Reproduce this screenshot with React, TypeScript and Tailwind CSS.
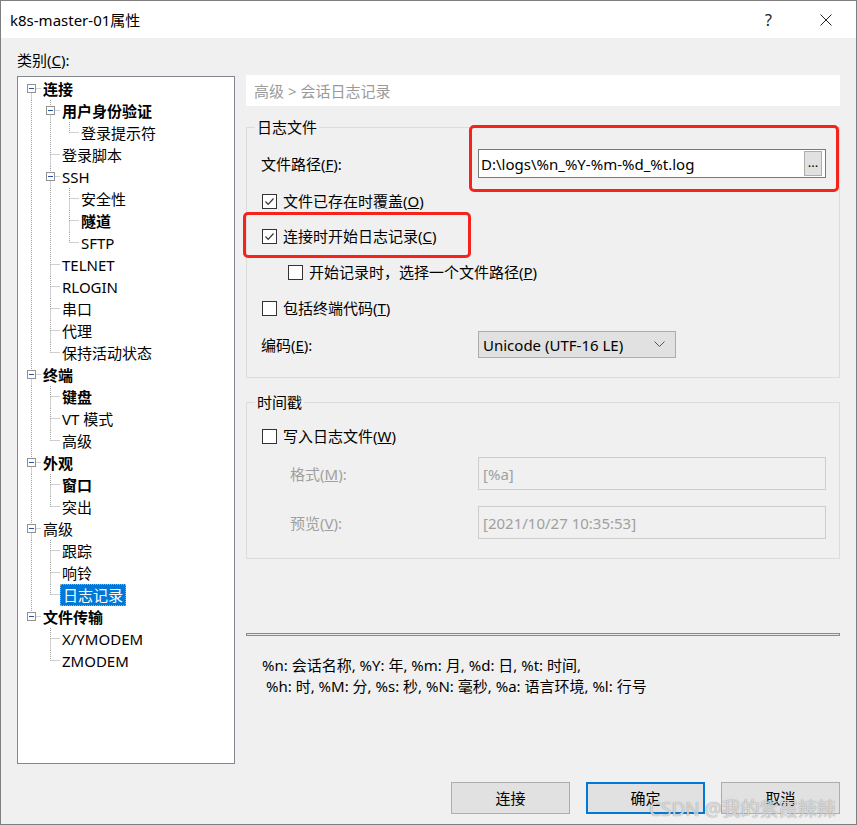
import React from "react";

type Node = {
  label: string;
  bold?: boolean;
  selected?: boolean;
  children?: Node[];
};

const tree: Node[] = [
  {
    label: "连接",
    bold: true,
    children: [
      { label: "用户身份验证", bold: true, children: [{ label: "登录提示符" }] },
      { label: "登录脚本" },
      {
        label: "SSH",
        children: [{ label: "安全性" }, { label: "隧道", bold: true }, { label: "SFTP" }],
      },
      { label: "TELNET" },
      { label: "RLOGIN" },
      { label: "串口" },
      { label: "代理" },
      { label: "保持活动状态" },
    ],
  },
  {
    label: "终端",
    bold: true,
    children: [{ label: "键盘", bold: true }, { label: "VT 模式" }, { label: "高级" }],
  },
  { label: "外观", bold: true, children: [{ label: "窗口", bold: true }, { label: "突出" }] },
  {
    label: "高级",
    children: [{ label: "跟踪" }, { label: "响铃" }, { label: "日志记录", selected: true }],
  },
  { label: "文件传输", bold: true, children: [{ label: "X/YMODEM" }, { label: "ZMODEM" }] },
];

type Row = {
  node: Node;
  guides: boolean[];
  hasNext: boolean;
  first: boolean;
  level: number;
};

const flatten = (nodes: Node[], guides: boolean[], level: number, out: Row[]) => {
  nodes.forEach((node, i) => {
    const hasNext = i < nodes.length - 1;
    out.push({ node, guides, hasNext, first: level === 0 && i === 0, level });
    if (node.children) flatten(node.children, [...guides, hasNext], level + 1, out);
  });
  return out;
};

const rows = flatten(tree, [], 0, []);

const dot = { stroke: "#a0a0a0", strokeWidth: 1, strokeDasharray: "1 1" };

const GuideCell = ({ on }: { on: boolean }) => (
  <svg width="19" height="22" className="shrink-0">
    {on && <line x1="9.5" y1="0" x2="9.5" y2="22" {...dot} />}
  </svg>
);

const OwnCell = ({ row }: { row: Row }) => (
  <svg width="19" height="22" className="shrink-0">
    {!row.first && <line x1="9.5" y1="0" x2="9.5" y2="10.5" {...dot} />}
    {row.hasNext && <line x1="9.5" y1="10.5" x2="9.5" y2="22" {...dot} />}
    <line x1="9.5" y1="10.5" x2="19" y2="10.5" {...dot} />
    {row.node.children && (
      <>
        <rect x="5.5" y="6.5" width="8" height="8" fill="#fff" stroke="#919191" />
        <line x1="7" y1="10.5" x2="12" y2="10.5" stroke="#2a52a8" />
      </>
    )}
  </svg>
);

const Check = ({ checked, label }: { checked?: boolean; label: React.ReactNode }) => (
  <div className="flex items-center h-[20px]">
    <div className="w-[15px] h-[15px] border border-[#333] bg-white flex items-center justify-center">
      {checked && (
        <svg width="11" height="11" viewBox="0 0 11 11">
          <path d="M1.5 5.5 L4.2 8.3 L9.5 2.5" fill="none" stroke="#333" strokeWidth="1.2" />
        </svg>
      )}
    </div>
    <span className="ml-[6px]">{label}</span>
  </div>
);

const Legend = ({ children }: { children: React.ReactNode }) => (
  <legend className="ml-[8px] px-[2px] leading-[20px]">{children}</legend>
);

const Button = ({ children, primary }: { children: React.ReactNode; primary?: boolean }) => (
  <div
    className={`w-[119px] h-[32px] flex items-center justify-center bg-[#e1e1e1] ${
      primary ? "border-2 border-[#0078d7]" : "border border-[#adadad]"
    }`}
  >
    {children}
  </div>
);

export default function App() {
  return (
    <div className="relative w-[857px] h-[825px] overflow-hidden border border-[#7f7f7f] bg-[#f0f0f0] text-[15px] leading-[20px] text-black font-['Noto_Sans','Noto_Sans_CJK_SC',sans-serif]">
      {/* title bar */}
      <div className="h-[37px] bg-white flex items-center pl-[9px] pr-[24px]">
        <span>k8s-master-01属性</span>
        <span className="ml-auto mr-[48px] text-[16px] text-[#222]">?</span>
        <svg width="12" height="12" viewBox="0 0 12 12">
          <path d="M0.5 0.5 L11.5 11.5 M11.5 0.5 L0.5 11.5" stroke="#222" strokeWidth="1" />
        </svg>
      </div>

      <div className="px-[16px] pt-[12px]">
        <div>
          类别(<u>C</u>):
        </div>

        <div className="flex items-start mt-[5px]">
          {/* tree */}
          <div className="mt-[1px] w-[218px] h-[688px] shrink-0 border border-[#828790] bg-white pl-[4px] pt-[1px]">
            {rows.map((row, i) => (
              <div key={i} className="flex h-[22px] items-center">
                {row.guides.map((g, j) => (
                  <GuideCell key={j} on={g} />
                ))}
                <OwnCell row={row} />
                <div
                  className={`h-[22px] flex items-center px-[2px] whitespace-nowrap ${
                    row.node.bold ? "font-bold" : ""
                  } ${
                    row.node.selected
                      ? "bg-[#0078d7] text-white border border-dotted border-[#e8a040]"
                      : ""
                  }`}
                >
                  {row.node.label}
                </div>
              </div>
            ))}
          </div>

          {/* right panel */}
          <div className="ml-[11px] w-[594px] flex flex-col">
            <div className="h-[31px] bg-white flex items-center pl-[8px] text-[#9a9a9a]">
              高级 &gt; 会话日志记录
            </div>

            <fieldset className="mt-[11px] border border-[#dcdcdc] pb-[19px]">
              <Legend>日志文件</Legend>
              <div className="flex items-center h-[29px] mt-[12px]">
                <div className="w-[231px] pl-[14px]">
                  文件路径(<u>F</u>):
                </div>
                <div className="w-[348px] h-[29px] border border-[#7a7a7a] bg-white flex items-center pl-[2px]">
                  <span className="flex-1">D:\logs\%n_%Y-%m-%d_%t.log</span>
                  <div className="w-[18px] h-[25px] mr-[3px] bg-[#e1e1e1] border border-[#adadad] flex items-center justify-center text-[13px] leading-none pb-[2px]">
                    ...
                  </div>
                </div>
              </div>

              <div className="pl-[15px] mt-[13px]">
                <Check checked label={<>文件已存在时覆盖(<u>O</u>)</>} />
              </div>
              <div className="pl-[15px] mt-[15px]">
                <Check checked label={<>连接时开始日志记录(<u>C</u>)</>} />
              </div>
              <div className="pl-[41px] mt-[16px]">
                <Check label={<>开始记录时，选择一个文件路径(<u>P</u>)</>} />
              </div>
              <div className="pl-[15px] mt-[16px]">
                <Check label={<>包括终端代码(<u>T</u>)</>} />
              </div>

              <div className="flex items-center h-[27px] mt-[13px]">
                <div className="w-[231px] pl-[14px]">
                  编码(<u>E</u>):
                </div>
                <div className="w-[198px] h-[27px] border border-[#adadad] bg-[#e1e1e1] flex items-center pl-[4px] pr-[10px]">
                  <span className="flex-1">Unicode (UTF-16 LE)</span>
                  <svg width="11" height="7" viewBox="0 0 11 7">
                    <polyline points="0.5,0.5 5.5,5.5 10.5,0.5" fill="none" stroke="#555" />
                  </svg>
                </div>
              </div>
            </fieldset>

            <fieldset className="mt-[14px] border border-[#dcdcdc] pb-[19px]">
              <Legend>时间戳</Legend>
              <div className="pl-[15px] mt-[14px]">
                <Check label={<>写入日志文件(<u>W</u>)</>} />
              </div>
              <div className="flex items-center h-[33px] mt-[11px] text-[#a0a0a0]">
                <div className="w-[231px] pl-[43px]">
                  格式(<u>M</u>):
                </div>
                <div className="w-[348px] h-[33px] border border-[#cccccc] flex items-center pl-[4px]">
                  [%a]
                </div>
              </div>
              <div className="flex items-center h-[33px] mt-[16px] text-[#a0a0a0]">
                <div className="w-[231px] pl-[43px]">
                  预览(<u>V</u>):
                </div>
                <div className="w-[348px] h-[33px] border border-[#cccccc] flex items-center pl-[4px]">
                  [2021/10/27 10:35:53]
                </div>
              </div>
            </fieldset>

            <div className="mt-[74px] h-[3px] border border-[#8a8a8a] bg-[#e6e6e6]" />

            <div className="mt-[19px] pl-[16px] leading-[21px]">
              <div>%n: 会话名称, %Y: 年, %m: 月, %d: 日, %t: 时间,</div>
              <div className="pl-[4px]">%h: 时, %M: 分, %s: 秒, %N: 毫秒, %a: 语言环境, %l: 行号</div>
            </div>
          </div>
        </div>

        <div className="flex justify-end gap-[16px] mt-[18px]">
          <Button>连接</Button>
          <Button primary>确定</Button>
          <Button>取消</Button>
        </div>
      </div>

      {/* red annotation boxes */}
      <div className="absolute left-[468px] top-[124px] w-[370px] h-[67px] border-[3px] border-[#f5231b] rounded-[5px]" />
      <div className="absolute left-[242px] top-[211px] w-[228px] h-[46px] border-[3px] border-[#f5231b] rounded-[5px]" />

      {/* watermark */}
      <div className="absolute left-[648px] top-[796px] text-[19px] leading-[24px] text-white/70 [text-shadow:0_0_1px_#707070] whitespace-nowrap">
        CSDN @我的紫霞辣辣
      </div>
    </div>
  );
}
